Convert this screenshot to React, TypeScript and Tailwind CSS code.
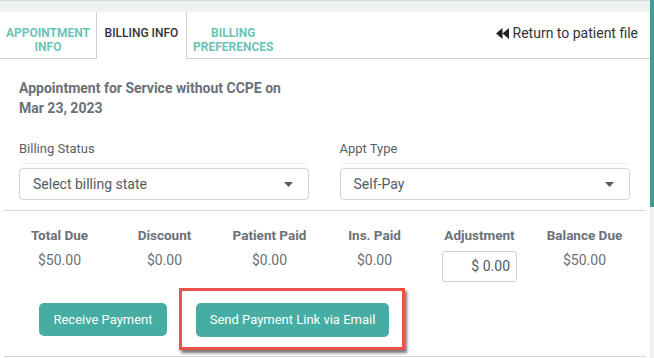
import React from "react";

const font = "font-['Roboto','Liberation_Sans',sans-serif]";

const Caret: React.FC = () => (
    <svg width="9" height="5" viewBox="0 0 9 5" className="shrink-0">
        <path d="M0 0h9L4.5 5z" fill="#555b63"/>
    </svg>
);

const BackIcon: React.FC = () => (
    <svg width="13" height="11" viewBox="0 0 13 11">
        <path d="M6.5 0v11L0 5.5z M13 0v11L6.5 5.5z" fill="#222"/>
    </svg>
);

interface SelectProps {
    label: string;
    value: string;
}

const Select: React.FC<SelectProps> = ({label, value}) => (
    <div className="flex-1">
        <div className="text-[13px] text-[#5b6068] h-[18px] leading-[18px]">{label}</div>
        <div className="mt-[5px] ml-px border-t border-[#f0f0f0] h-[5px] w-[288px]"/>
        <div
            className="w-[290px] h-[32px] border border-[#d4d4d4] rounded-[4px] flex items-center justify-between pl-[13px] pr-[15px] text-[14px] text-[#555b63]">
            <span>{value}</span>
            <Caret/>
        </div>
    </div>
);

const cols = [
    {title: "Total Due", value: "$50.00"},
    {title: "Discount", value: "$0.00"},
    {title: "Patient Paid", value: "$0.00"},
    {title: "Ins. Paid", value: "$0.00"},
    {title: "Adjustment", value: ""},
    {title: "Balance Due", value: "$50.00"},
];

export default function App() {
    return (
        <div className={`${font} w-[654px] h-[358px] bg-white flex overflow-hidden`}>
            <div className="w-[650px]">
                {/* top strip */}
                <div className="h-[12px] bg-[#eef2f2] border-t border-[#dcdcdc]"/>

                {/* tabs */}
                <div className="flex h-[47px]">
                    <div
                        className="w-[96px] border-b border-[#d0d0d0] flex flex-col items-center pt-[14px] text-[12px] font-bold leading-[14px] text-[#6cc4b6]">
                        <span>APPOINTMENT</span>
                        <span>INFO</span>
                    </div>
                    <div
                        className="w-[91px] border-x border-[#d0d0d0] flex justify-center pt-[14px] text-[12px] font-medium leading-[14px] text-[#333]">
                        BILLING INFO
                    </div>
                    <div
                        className="flex-1 border-b border-[#d0d0d0] flex items-start justify-between pl-[6px] pr-[12px]">
                        <div
                            className="flex flex-col items-center pt-[14px] text-[12px] font-bold leading-[14px] text-[#6cc4b6]">
                            <span>BILLING</span>
                            <span>PREFERENCES</span>
                        </div>
                        <div className="flex items-center gap-[4px] pt-[11px] text-[14px] text-[#333]">
                            <BackIcon/>
                            <span>Return to patient file</span>
                        </div>
                    </div>
                </div>

                {/* heading */}
                <div
                    className="pl-[19px] pt-[19px] w-[300px] text-[14px] font-bold leading-[20px] text-[#6b7079]">
                    Appointment for Service without CCPE on Mar 23, 2023
                </div>

                {/* selects */}
                <div className="flex pl-[19px] pt-[22px] gap-[30px] pr-[20px]">
                    <Select label="Billing Status" value="Select billing state"/>
                    <Select label="Appt Type" value="Self-Pay"/>
                </div>

                <div className="mx-[4px] mt-[10px] border-t border-[#d6d6d6]"/>

                {/* totals */}
                <div className="grid grid-cols-6 ml-[7px] w-[630px] pt-[15px]">
                    {cols.map((c) => (
                        <div key={c.title} className="flex flex-col items-center">
                            <div className="text-[13.5px] font-bold text-[#6b7079] leading-[18px]">{c.title}</div>
                            {c.title === "Adjustment" ? (
                                <div
                                    className="mt-[7px] w-[75px] h-[31px] border border-[#d0d0d0] rounded-[3px] flex items-center justify-end pr-[6px] text-[14px] text-[#555b63]">
                                    $ 0.00
                                </div>
                            ) : (
                                <div className="mt-[7px] text-[14px] text-[#6b7079] leading-[18px]">{c.value}</div>
                            )}
                        </div>
                    ))}
                </div>

                {/* buttons */}
                <div className="flex items-start pl-[39px] pt-[6px]">
                    <button
                        className="mt-[15px] w-[128px] h-[33px] rounded-[5px] bg-[#45ada2] text-white text-[13px]">
                        Receive Payment
                    </button>
                    <div
                        className="ml-[12px] border-[3px] border-[#ea5148] shadow-[2px_3px_3px_rgba(0,0,0,0.55)] pt-[12px] pb-[10px] pl-[14px] pr-[13px]">
                        <button className="w-[193px] h-[34px] rounded-[5px] bg-[#45ada2] text-white text-[13px]">
                            Send Payment Link via Email
                        </button>
                    </div>
                </div>

                <div className="mx-[4px] mt-[6px] border-t border-[#d6d6d6]"/>
            </div>

            {/* right edge */}
            <div className="w-[4px] flex flex-col">
                <div className="h-[207px] bg-[#3e9e93]"/>
                <div className="flex-1 bg-[#f1f1f1]"/>
            </div>
        </div>
    );
}
